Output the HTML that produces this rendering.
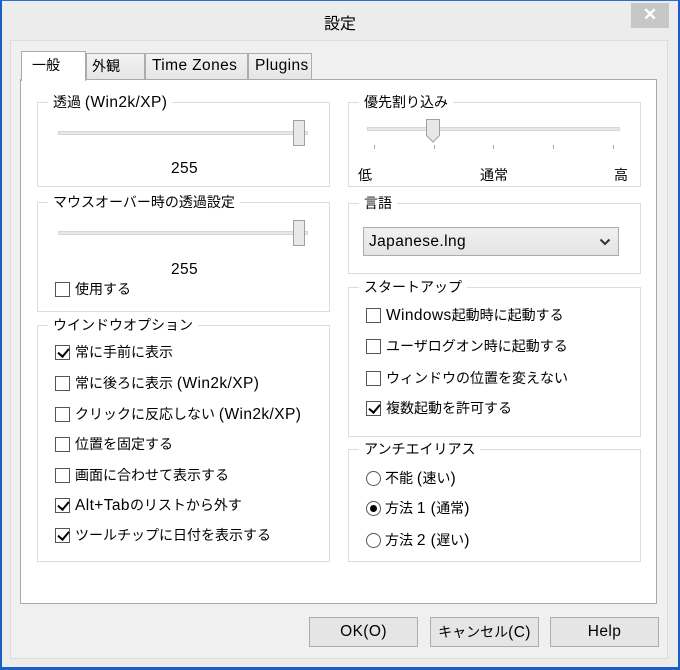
<!DOCTYPE html>
<html><head><meta charset="utf-8"><style>
*{box-sizing:border-box;margin:0;padding:0}
body{width:680px;height:670px;overflow:hidden;background:#ececec;font-family:"Liberation Sans","Noto Sans CJK JP",sans-serif;font-size:14px;color:#000;position:relative}
.a{position:absolute}
.l{font-size:15.5px;letter-spacing:0.4px}
.win{left:0;top:0;width:680px;height:670px;border:2px solid #1a5fc8;border-top:1px solid #2a6fd8;border-bottom:3px solid #1a5fc8}
.frame{left:10px;top:40px;width:658px;height:619px;border:1px solid #dcdcdc;background:#f0f0f0}
.page{left:20px;top:79px;width:637px;height:525px;border:1px solid #a9a9a9;background:#fff}
.tab{height:26px;border:1px solid #adadad;border-bottom:none;background:linear-gradient(#f2f2f2,#e6e6e6);line-height:24px;padding-left:5px}
.grp{border:1px solid #dcdcdc}
.gt{background:#fff;padding:0 5px;line-height:18px;height:18px}
.it{height:18px;line-height:18px;white-space:nowrap}
.cb{display:inline-block;width:15px;height:15px;border:1px solid #555;vertical-align:-3px;margin-right:5px;position:relative;background:#fff}
.cb.on:after{content:"";position:absolute;left:4px;top:0px;width:5px;height:9px;border:solid #000;border-width:0 2.5px 2.5px 0;transform:rotate(40deg)}
.rb{display:inline-block;width:15px;height:15px;border:1px solid #555;border-radius:50%;vertical-align:-3px;margin-right:4px;position:relative;background:#fff}
.rb.on:after{content:"";position:absolute;left:3px;top:3px;width:7px;height:7px;border-radius:50%;background:#000}
.track{height:4px;border:1px solid #d6d6d6;background:#e7e7e7}
.thumb{width:12px;height:26px;border:1px solid #a0a0a0;background:#e8e8e8}
.btn{height:30px;border:1px solid #adadad;background:#e5e5e5;text-align:center;line-height:28px}
</style></head><body>
<div class="a win"></div>
<div class="a" style="left:0;top:10px;width:680px;text-align:center;font-size:16px">設定</div>
<div class="a" style="left:631px;top:3px;width:38px;height:25px;background:#c7c7c7;color:#fff;text-align:center;line-height:24px;font-size:17px;font-weight:bold">✕</div>
<div class="a frame"></div>
<div class="a page"></div>
<div class="a tab" style="left:86px;top:53px;width:59px">外観</div>
<div class="a tab l" style="left:145px;top:53px;width:103px;padding-left:6px">Time Zones</div>
<div class="a tab l" style="left:248px;top:53px;width:64px;padding-left:6px">Plugins</div>
<div class="a tab" style="left:21px;top:51px;width:65px;height:30px;background:#fff;border-color:#a9a9a9;padding-left:10px;line-height:26px">一般</div>

<div class="a grp" style="left:37px;top:102px;width:293px;height:85px"></div>
<div class="a gt" style="left:48px;top:93px">透過 <span class="l">(Win2k/XP)</span></div>
<div class="a track" style="left:58px;top:131px;width:250px"></div>
<div class="a thumb" style="left:293px;top:120px"></div>
<div class="a l" style="left:171px;top:160px">255</div>

<div class="a grp" style="left:37px;top:202px;width:293px;height:110px"></div>
<div class="a gt" style="left:48px;top:193px">マウスオーバー時の透過設定</div>
<div class="a track" style="left:58px;top:231px;width:250px"></div>
<div class="a thumb" style="left:293px;top:220px"></div>
<div class="a l" style="left:171px;top:261px">255</div>
<div class="a it" style="left:55px;top:280px"><span class="cb"></span>使用する</div>

<div class="a grp" style="left:37px;top:325px;width:293px;height:237px"></div>
<div class="a gt" style="left:48px;top:316px">ウインドウオプション</div>
<div class="a it" style="left:55px;top:343px"><span class="cb on"></span>常に手前に表示</div>
<div class="a it" style="left:55px;top:374px"><span class="cb"></span>常に後ろに表示 <span class="l">(Win2k/XP)</span></div>
<div class="a it" style="left:55px;top:405px"><span class="cb"></span>クリックに反応しない <span class="l">(Win2k/XP)</span></div>
<div class="a it" style="left:55px;top:435px"><span class="cb"></span>位置を固定する</div>
<div class="a it" style="left:55px;top:466px"><span class="cb"></span>画面に合わせて表示する</div>
<div class="a it" style="left:55px;top:496px"><span class="cb on"></span><span class="l">Alt+Tab</span>のリストから外す</div>
<div class="a it" style="left:55px;top:526px"><span class="cb on"></span>ツールチップに日付を表示する</div>

<div class="a grp" style="left:348px;top:102px;width:293px;height:85px"></div>
<div class="a gt" style="left:359px;top:93px">優先割り込み</div>
<div class="a track" style="left:367px;top:127px;width:253px"></div>
<svg class="a" style="left:426px;top:119px" width="16" height="26"><path d="M0.5 0.5H13.5V16.5L7 23L0.5 16.5Z" fill="#e8e8e8" stroke="#a0a0a0"/></svg>
<div class="a" style="left:374px;top:145px;width:1px;height:4px;background:#aaa"></div>
<div class="a" style="left:434px;top:145px;width:1px;height:4px;background:#aaa"></div>
<div class="a" style="left:493px;top:145px;width:1px;height:4px;background:#aaa"></div>
<div class="a" style="left:553px;top:145px;width:1px;height:4px;background:#aaa"></div>
<div class="a" style="left:613px;top:145px;width:1px;height:4px;background:#aaa"></div>
<div class="a" style="left:358px;top:165px">低</div>
<div class="a" style="left:480px;top:165px">通常</div>
<div class="a" style="left:614px;top:165px">高</div>

<div class="a grp" style="left:348px;top:203px;width:293px;height:71px"></div>
<div class="a gt" style="left:359px;top:194px">言語</div>
<div class="a l" style="left:363px;top:227px;width:256px;height:29px;border:1px solid #acacac;background:linear-gradient(#f0f0f0,#e4e4e4);line-height:27px;padding-left:5px">Japanese.lng</div>
<svg class="a" style="left:599px;top:237px" width="12" height="10"><path d="M1.5 2.5L6 7L10.5 2.5" fill="none" stroke="#333" stroke-width="2"/></svg>

<div class="a grp" style="left:348px;top:287px;width:293px;height:150px"></div>
<div class="a gt" style="left:359px;top:278px">スタートアップ</div>
<div class="a it" style="left:366px;top:306px"><span class="cb"></span><span class="l">Windows</span>起動時に起動する</div>
<div class="a it" style="left:366px;top:337px"><span class="cb"></span>ユーザログオン時に起動する</div>
<div class="a it" style="left:366px;top:369px"><span class="cb"></span>ウィンドウの位置を変えない</div>
<div class="a it" style="left:366px;top:399px"><span class="cb on"></span>複数起動を許可する</div>

<div class="a grp" style="left:348px;top:449px;width:293px;height:113px"></div>
<div class="a gt" style="left:359px;top:440px">アンチエイリアス</div>
<div class="a it" style="left:366px;top:469px"><span class="rb"></span>不能 <span class="l">(</span>速い<span class="l">)</span></div>
<div class="a it" style="left:366px;top:499px"><span class="rb on"></span>方法 <span class="l">1 (</span>通常<span class="l">)</span></div>
<div class="a it" style="left:366px;top:531px"><span class="rb"></span>方法 <span class="l">2 (</span>遅い<span class="l">)</span></div>

<div class="a btn l" style="left:309px;top:617px;width:109px">OK(O)</div>
<div class="a btn" style="left:430px;top:617px;width:109px">キャンセル<span class="l">(C)</span></div>
<div class="a btn l" style="left:550px;top:617px;width:109px">Help</div>
</body></html>
